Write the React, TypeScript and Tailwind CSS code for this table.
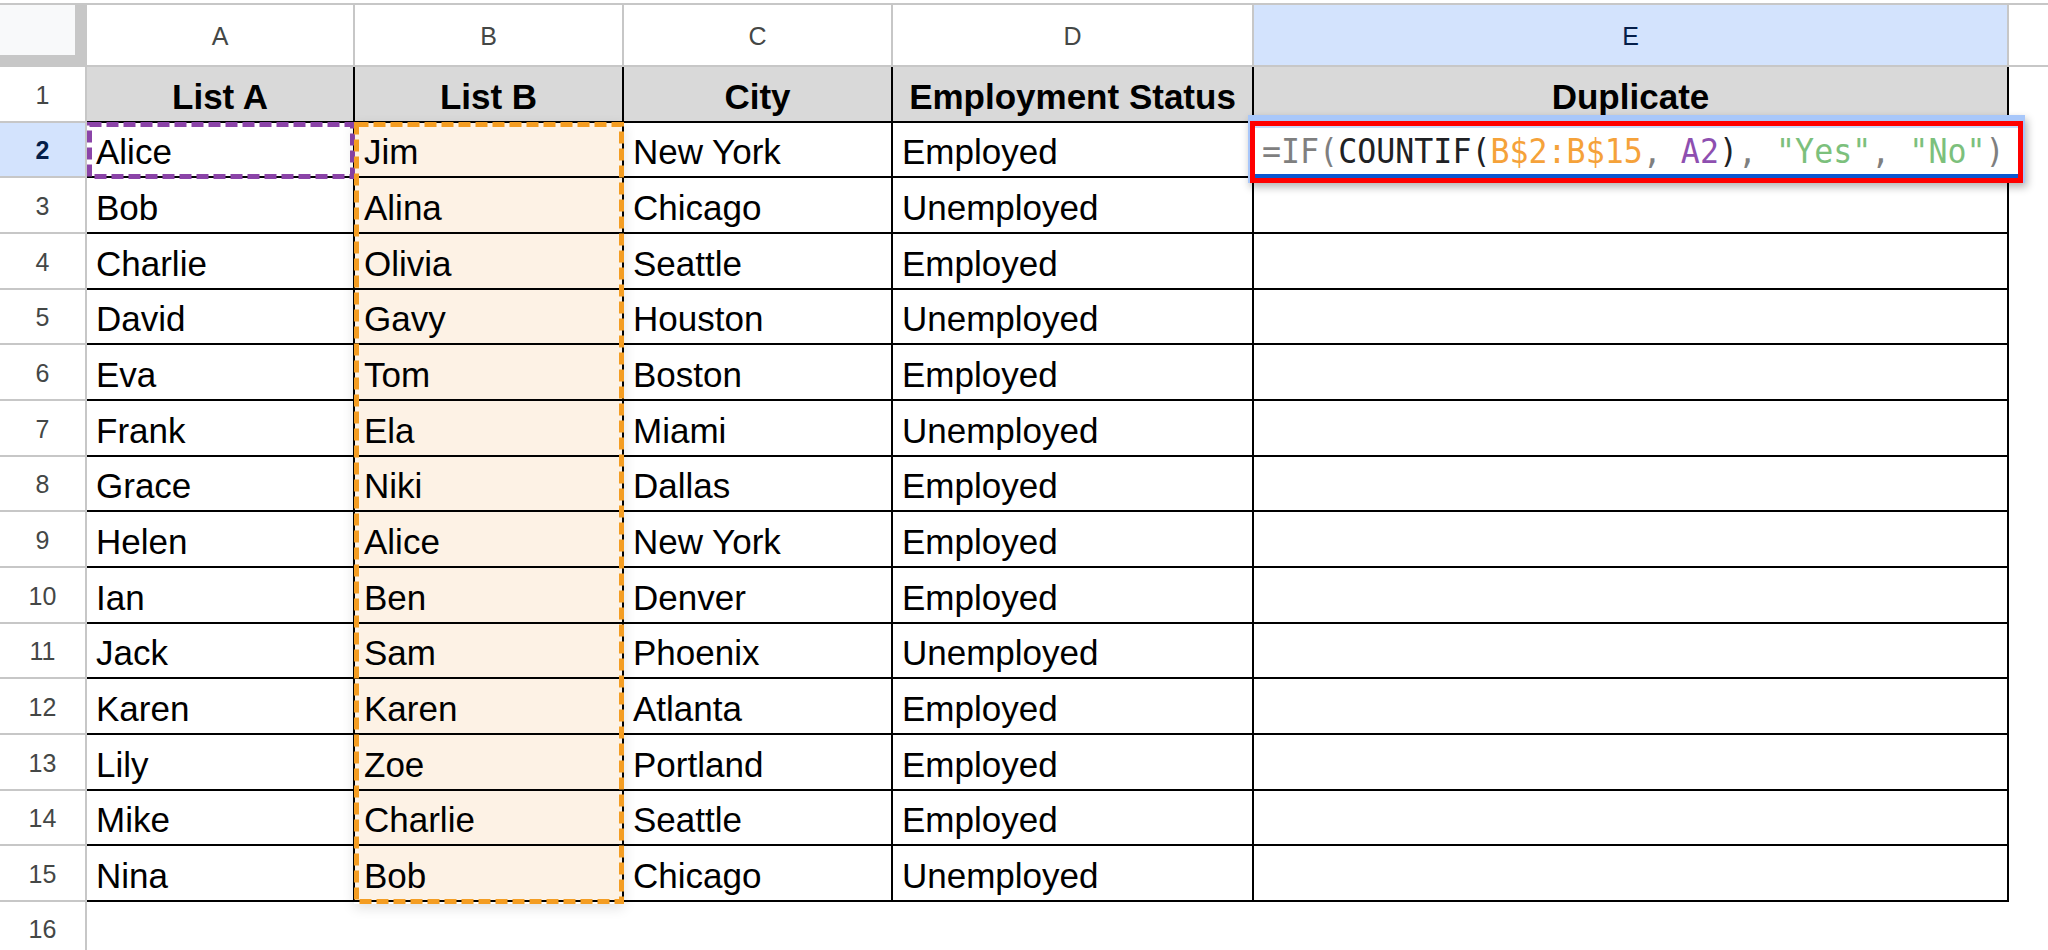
import React from 'react'
import clsx from 'clsx'

type Row = { a: string; b: string; city: string; status: string }

const data: Row[] = [
  { a: 'Alice', b: 'Jim', city: 'New York', status: 'Employed' },
  { a: 'Bob', b: 'Alina', city: 'Chicago', status: 'Unemployed' },
  { a: 'Charlie', b: 'Olivia', city: 'Seattle', status: 'Employed' },
  { a: 'David', b: 'Gavy', city: 'Houston', status: 'Unemployed' },
  { a: 'Eva', b: 'Tom', city: 'Boston', status: 'Employed' },
  { a: 'Frank', b: 'Ela', city: 'Miami', status: 'Unemployed' },
  { a: 'Grace', b: 'Niki', city: 'Dallas', status: 'Employed' },
  { a: 'Helen', b: 'Alice', city: 'New York', status: 'Employed' },
  { a: 'Ian', b: 'Ben', city: 'Denver', status: 'Employed' },
  { a: 'Jack', b: 'Sam', city: 'Phoenix', status: 'Unemployed' },
  { a: 'Karen', b: 'Karen', city: 'Atlanta', status: 'Employed' },
  { a: 'Lily', b: 'Zoe', city: 'Portland', status: 'Employed' },
  { a: 'Mike', b: 'Charlie', city: 'Seattle', status: 'Employed' },
  { a: 'Nina', b: 'Bob', city: 'Chicago', status: 'Unemployed' },
]

const cell = 'h-full flex items-center border-r-2 border-b-2 border-black px-[9px] pt-[5px] leading-none whitespace-nowrap'

function RowHead({ n, active }: { n: number; active?: boolean }) {
  return (
    <div
      className={clsx(
        'w-[87px] h-full shrink-0 flex items-center justify-center border-r-2 border-b-2 border-[#c7c7c7] pt-[3px] text-[25px] leading-none',
        active ? 'bg-[#d3e3fd] text-[#041e49] font-bold' : 'bg-white text-[#444746]'
      )}
    >
      {n}
    </div>
  )
}

function App() {
  return (
    <div className="relative w-[2048px] h-[950px] overflow-hidden bg-white font-['Liberation_Sans',Arial,sans-serif] text-black">
      <div className="h-[3px]" />
      {/* column letters */}
      <div className="flex h-[64px] border-t-2 border-b-2 border-[#c7c7c7]">
        <div className="w-[87px] shrink-0 bg-[#c7c7c7]">
          <div className="w-[75px] h-[50px] bg-[#f8f9fa]" />
        </div>
        <div className="w-[268px] shrink-0 flex items-center justify-center pt-[4px] border-r-2 border-[#c7c7c7] text-[25px] text-[#444746]">A</div>
        <div className="w-[269px] shrink-0 flex items-center justify-center pt-[4px] border-r-2 border-[#c7c7c7] text-[25px] text-[#444746]">B</div>
        <div className="w-[269px] shrink-0 flex items-center justify-center pt-[4px] border-r-2 border-[#c7c7c7] text-[25px] text-[#444746]">C</div>
        <div className="w-[361px] shrink-0 flex items-center justify-center pt-[4px] border-r-2 border-[#c7c7c7] text-[25px] text-[#444746]">D</div>
        <div className="w-[755px] shrink-0 flex items-center justify-center pt-[4px] border-r-2 border-[#c7c7c7] bg-[#d3e3fd] text-[25px] text-[#041e49]">E</div>
        <div className="flex-1" />
      </div>

      {/* header row */}
      <div className="flex h-[55.67px]">
        <RowHead n={1} />
        <div className={clsx(cell, 'w-[268px] justify-center bg-[#d9d9d9] font-bold text-[35px]')}>List A</div>
        <div className={clsx(cell, 'w-[269px] justify-center bg-[#d9d9d9] font-bold text-[35px]')}>List B</div>
        <div className={clsx(cell, 'w-[269px] justify-center bg-[#d9d9d9] font-bold text-[35px]')}>City</div>
        <div className={clsx(cell, 'w-[361px] justify-center bg-[#d9d9d9] font-bold text-[35px]')}>Employment Status</div>
        <div className={clsx(cell, 'w-[755px] justify-center bg-[#d9d9d9] font-bold text-[35px]')}>Duplicate</div>
      </div>

      {data.map((r, i) => (
        <div key={i} className="flex h-[55.67px]">
          <RowHead n={i + 2} active={i === 0} />
          <div className={clsx(cell, 'w-[268px] text-[35px]')}>{r.a}</div>
          <div className={clsx(cell, 'w-[269px] text-[35px] bg-[#fdf2e5]')}>{r.b}</div>
          <div className={clsx(cell, 'w-[269px] text-[35px]')}>{r.city}</div>
          <div className={clsx(cell, 'w-[361px] text-[35px]')}>{r.status}</div>
          <div className={clsx(cell, 'w-[755px] text-[35px]')}></div>
        </div>
      ))}

      <div className="flex h-[56px]">
        <div className="w-[87px] h-full shrink-0 flex items-center justify-center border-r-2 border-[#c7c7c7] text-[25px] leading-none text-[#444746]">16</div>
      </div>

      {/* A2 reference highlight */}
      <svg className="absolute left-[87px] top-[122px]" width="268" height="57">
        <rect x="2.5" y="2.5" width="263" height="52" fill="none" stroke="#8b44a8" strokeWidth="5" strokeDasharray="12 5" />
      </svg>

      {/* B2:B15 reference highlight */}
      <div className="absolute left-[354px] top-[122px] w-[270px] h-[782px] shadow-[0_4px_12px_rgba(0,0,0,0.12)]">
        <svg width="270" height="782" className="block">
          <rect x="2.5" y="2.5" width="265" height="777" fill="none" stroke="#f49d22" strokeWidth="5" strokeDasharray="12 5" />
        </svg>
      </div>

      {/* formula editor */}
      <div className="absolute left-[1248px] top-[115px] w-[777px] bg-[#a8c7fa] px-[2px] pt-[6px] shadow-[2px_4px_8px_rgba(0,0,0,0.3)]">
        <div className="border-[5px] border-[#ff0000] bg-white">
          <div className="h-[52px] border-t-2 border-[#c6dafc] border-b-4 border-b-[#0b57d0] pl-[7px] pt-[6px] overflow-hidden">
            <div className="origin-left scale-x-[0.93] whitespace-pre leading-none text-[34px] font-['DejaVu_Sans_Mono','Liberation_Mono',monospace]">
              <span className="text-[#7f7f7f]">=IF(</span>
              <span className="text-[#202124]">COUNTIF(</span>
              <span className="text-[#f5a23a]">B$2:B$15</span>
              <span className="text-[#7f7f7f]">, </span>
              <span className="text-[#8e4fb0]">A2</span>
              <span className="text-[#202124]">)</span>
              <span className="text-[#7f7f7f]">, </span>
              <span className="text-[#7cc07c]">"Yes"</span>
              <span className="text-[#7f7f7f]">, </span>
              <span className="text-[#7cc07c]">"No"</span>
              <span className="text-[#7f7f7f]">)</span>
            </div>
          </div>
        </div>
      </div>
    </div>
  )
}

export default App
